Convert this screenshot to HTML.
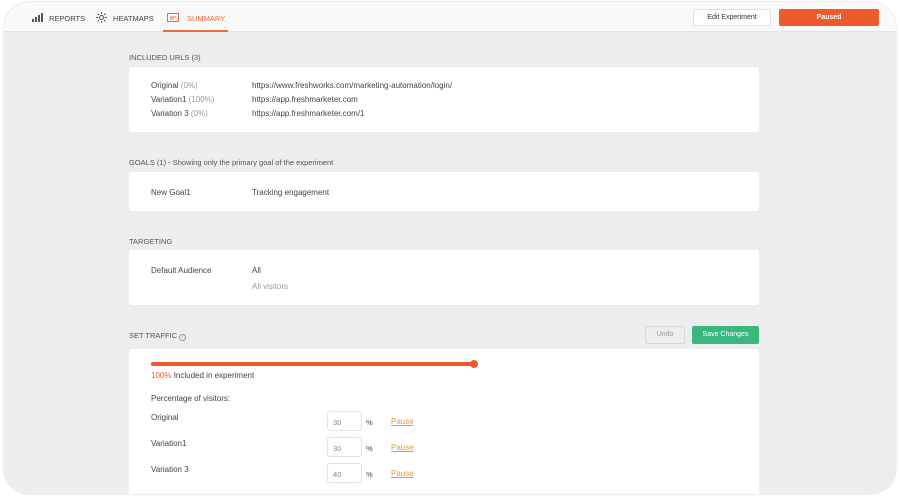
<!DOCTYPE html>
<html><head><style>
*{margin:0;padding:0;box-sizing:border-box}
body{width:900px;height:496px;background:#fff;font-family:"Liberation Sans",sans-serif;position:relative;overflow:hidden;color:#333}
.frame{position:absolute;left:4px;top:2px;width:892px;height:492px;border-radius:26px;background:#ecedef;overflow:hidden;box-shadow:0 0 2px #ccc}
.nav{position:absolute;left:0;top:0;width:100%;height:30px;background:#f9f9f9;border-bottom:1px solid #e4e4e4}
.t{position:absolute;font-size:7.5px;color:#444}
.card{position:absolute;left:125px;width:630px;background:#fff;border-radius:3px}
.card .t{font-size:8px!important}
.h{position:absolute;left:125px;font-size:7.5px;color:#555}
.g{color:#999}
.in{position:absolute;left:323px;width:35px;height:20px;border:1px solid #e2e2e2;border-radius:3px;font-size:7.5px;color:#888;padding:6px 0 0 5px}
.p{position:absolute;left:387px;font-size:8px;color:#e89a2c;text-decoration:underline}
</style></head><body>
<div class="frame">
<div class="nav">
 <svg style="position:absolute;left:28px;top:11px" width="11" height="9"><rect x="0" y="6" width="2" height="3" fill="#555"/><rect x="3" y="4" width="2" height="5" fill="#555"/><rect x="6" y="2" width="2" height="7" fill="#555"/><rect x="9" y="0" width="2" height="9" fill="#555"/></svg>
 <div class="t" style="left:45px;top:12px">REPORTS</div>
 <svg style="position:absolute;left:92px;top:10px" width="11" height="11" stroke="#555" stroke-width="1"><circle cx="5.5" cy="5.5" r="2" fill="none"/><path d="M5.5 0v2M5.5 9v2M0 5.5h2M9 5.5h2M1.5 1.5l1.5 1.5M8 8l1.5 1.5M1.5 9.5L3 8M8 3l1.5-1.5"/></svg>
 <div class="t" style="left:109px;top:12px">HEATMAPS</div>
 <svg style="position:absolute;left:163px;top:11px" width="12" height="9"><rect x="0.5" y="0.5" width="11" height="8" fill="none" stroke="#ee6a3c"/><path d="M3 4h6M3 6h4" stroke="#ee6a3c"/></svg>
 <div class="t" style="left:183px;top:12px;color:#ee6a3c">SUMMARY</div>
 <div style="position:absolute;left:159px;top:28px;width:65px;height:2px;background:#ee6a3c"></div>
 <div style="position:absolute;left:689px;top:7px;width:78px;height:17px;background:#fff;border:1px solid #e2e2e2;border-radius:2px;font-size:7px;text-align:center;line-height:15px">Edit Experiment</div>
 <div style="position:absolute;left:775px;top:7px;width:100px;height:17px;background:#ee5a2a;border-radius:2px;font-size:7px;color:#fff;text-align:center;line-height:17px;font-weight:bold">Paused</div>
</div>
<div class="h" style="top:51px">INCLUDED URLS (3)</div>
<div class="card" style="top:65px;height:65px">
 <div class="t" style="left:22px;top:14px">Original <span class="g">(0%)</span></div>
 <div class="t" style="left:22px;top:28px">Variation1 <span class="g">(100%)</span></div>
 <div class="t" style="left:22px;top:42px">Variation 3 <span class="g">(0%)</span></div>
 <div class="t" style="left:123px;top:14px">https://www.freshworks.com/marketing-automation/login/</div>
 <div class="t" style="left:123px;top:28px">https://app.freshmarketer.com</div>
 <div class="t" style="left:123px;top:42px">https://app.freshmarketer.com/1</div>
</div>
<div class="h" style="top:156px">GOALS (1) - Showing only the primary goal of the experiment</div>
<div class="card" style="top:170px;height:39px">
 <div class="t" style="left:22px;top:16px">New Goal1</div>
 <div class="t" style="left:123px;top:16px">Tracking engagement</div>
</div>
<div class="h" style="top:235px">TARGETING</div>
<div class="card" style="top:248px;height:55px">
 <div class="t" style="left:22px;top:16px">Default Audience</div>
 <div class="t" style="left:123px;top:16px">All</div>
 <div class="t" style="left:123px;top:32px;color:#999">All visitors</div>
</div>
<div class="h" style="top:329px">SET TRAFFIC <span style="display:inline-block;width:7px;height:7px;border:1px solid #999;border-radius:50%;font-size:5px;text-align:center;line-height:5px;color:#999">?</span></div>
<div style="position:absolute;left:641px;top:324px;width:40px;height:18px;border:1px solid #d8d8d8;border-radius:2px;font-size:7px;color:#999;text-align:center;line-height:16px">Undo</div>
<div style="position:absolute;left:688px;top:324px;width:67px;height:18px;background:#3bb77e;border-radius:2px;font-size:7px;color:#fff;text-align:center;line-height:18px">Save Changes</div>
<div class="card" style="top:347px;height:150px">
 <div style="position:absolute;left:22px;top:13px;width:326px;height:4px;background:#ee5a2a;border-radius:2px"></div>
 <div style="position:absolute;left:341px;top:11px;width:8px;height:8px;background:#ee5a2a;border-radius:50%"></div>
 <div class="t" style="left:22px;top:22px"><span style="color:#ee5a2a">100%</span> Included in experiment</div>
 <div class="t" style="left:22px;top:45px">Percentage of visitors:</div>
 <div class="t" style="left:22px;top:64px">Original</div>
 <div class="t" style="left:22px;top:90px">Variation1</div>
 <div class="t" style="left:22px;top:116px">Variation 3</div>
</div>
<div class="in" style="top:409px">30</div><div class="t" style="left:362px;top:416px">%</div><div class="p" style="top:415px">Pause</div>
<div class="in" style="top:435px">30</div><div class="t" style="left:362px;top:442px">%</div><div class="p" style="top:441px">Pause</div>
<div class="in" style="top:461px">40</div><div class="t" style="left:362px;top:468px">%</div><div class="p" style="top:467px">Pause</div>
</div>
</body></html>
